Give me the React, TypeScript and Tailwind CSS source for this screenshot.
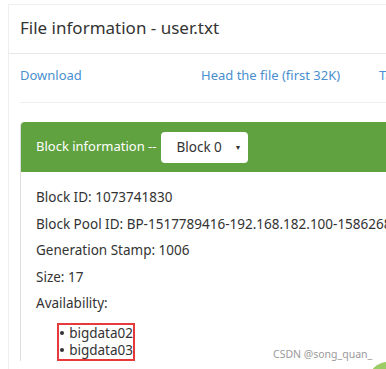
const rows = [
  'Block ID: 1073741830',
  'Block Pool ID: BP-1517789416-192.168.182.100-1586268835538',
  'Generation Stamp: 1006',
  'Size: 17',
  'Availability:',
];

export default function App() {
  return (
    <div
      className="w-[386px] h-[369px] overflow-hidden bg-white relative text-[#333]"
      style={{ fontFamily: '"Noto Sans", "Open Sans", sans-serif' }}
    >
      <div className="ml-[8px] mt-[4px] border-l border-t border-[#eeeeee] w-[600px] h-[400px]">
        {/* Header */}
        <div className="h-[49px] border-b border-[#e8e8e8] pl-[11px] pb-[2px] flex items-center">
          <h1 className="text-[17px] whitespace-nowrap">File information - user.txt</h1>
        </div>

        <div className="pl-[11px]">
          {/* Links */}
          <div className="h-[49px] pb-[5px] border-b border-[#eeeeee] flex items-center text-[13px] text-[#4a8fcf] whitespace-nowrap">
            <span className="w-[181px]">Download</span>
            <span className="w-[178px]">Head the file (first 32K)</span>
            <span>Tail the file (last 32K)</span>
          </div>

          {/* Block panel */}
          <div className="mt-[19px] border-l border-[#dddddd] rounded-tl-[4px]">
            <div className="h-[50px] bg-[#5fa23f] rounded-tl-[4px] flex items-center pl-[15px] text-white text-[13px] whitespace-nowrap">
              <span>Block information --</span>
              <div className="ml-[5px] w-[87px] h-[31px] bg-white rounded-[4px] flex items-center justify-between pl-[15px] pr-[7px] text-[#333] text-[13.5px]">
                <span>Block 0</span>
                <span className="text-[7px] leading-none">▼</span>
              </div>
            </div>
            <div className="pl-[15px] pt-[12px] text-[13.5px] whitespace-nowrap">
              {rows.map((r) => (
                <p key={r} className="leading-[26.5px]">{r}</p>
              ))}
              <div className="mt-[6px] ml-[21px] w-[78px] h-[38px] border-2 border-[#e5393b] flex flex-col justify-center leading-[17px]">
                {['bigdata02', 'bigdata03'].map((h) => (
                  <div key={h} className="flex items-center">
                    <span className="w-[13px] pl-[1px] flex items-center">
                      <span className="w-[4px] h-[4px] rounded-full bg-[#333]" />
                    </span>
                    <span>{h}</span>
                  </div>
                ))}
              </div>
            </div>
          </div>
        </div>
      </div>

      {/* watermark */}
      <span className="absolute left-[273px] top-[347px] text-[10.5px] text-[#9a9a9a] whitespace-nowrap">
        CSDN @song_quan_
      </span>
      <div className="absolute left-[368px] top-[362px] w-[40px] h-[40px] rounded-full bg-[#9ccc65]" />
    </div>
  );
}
